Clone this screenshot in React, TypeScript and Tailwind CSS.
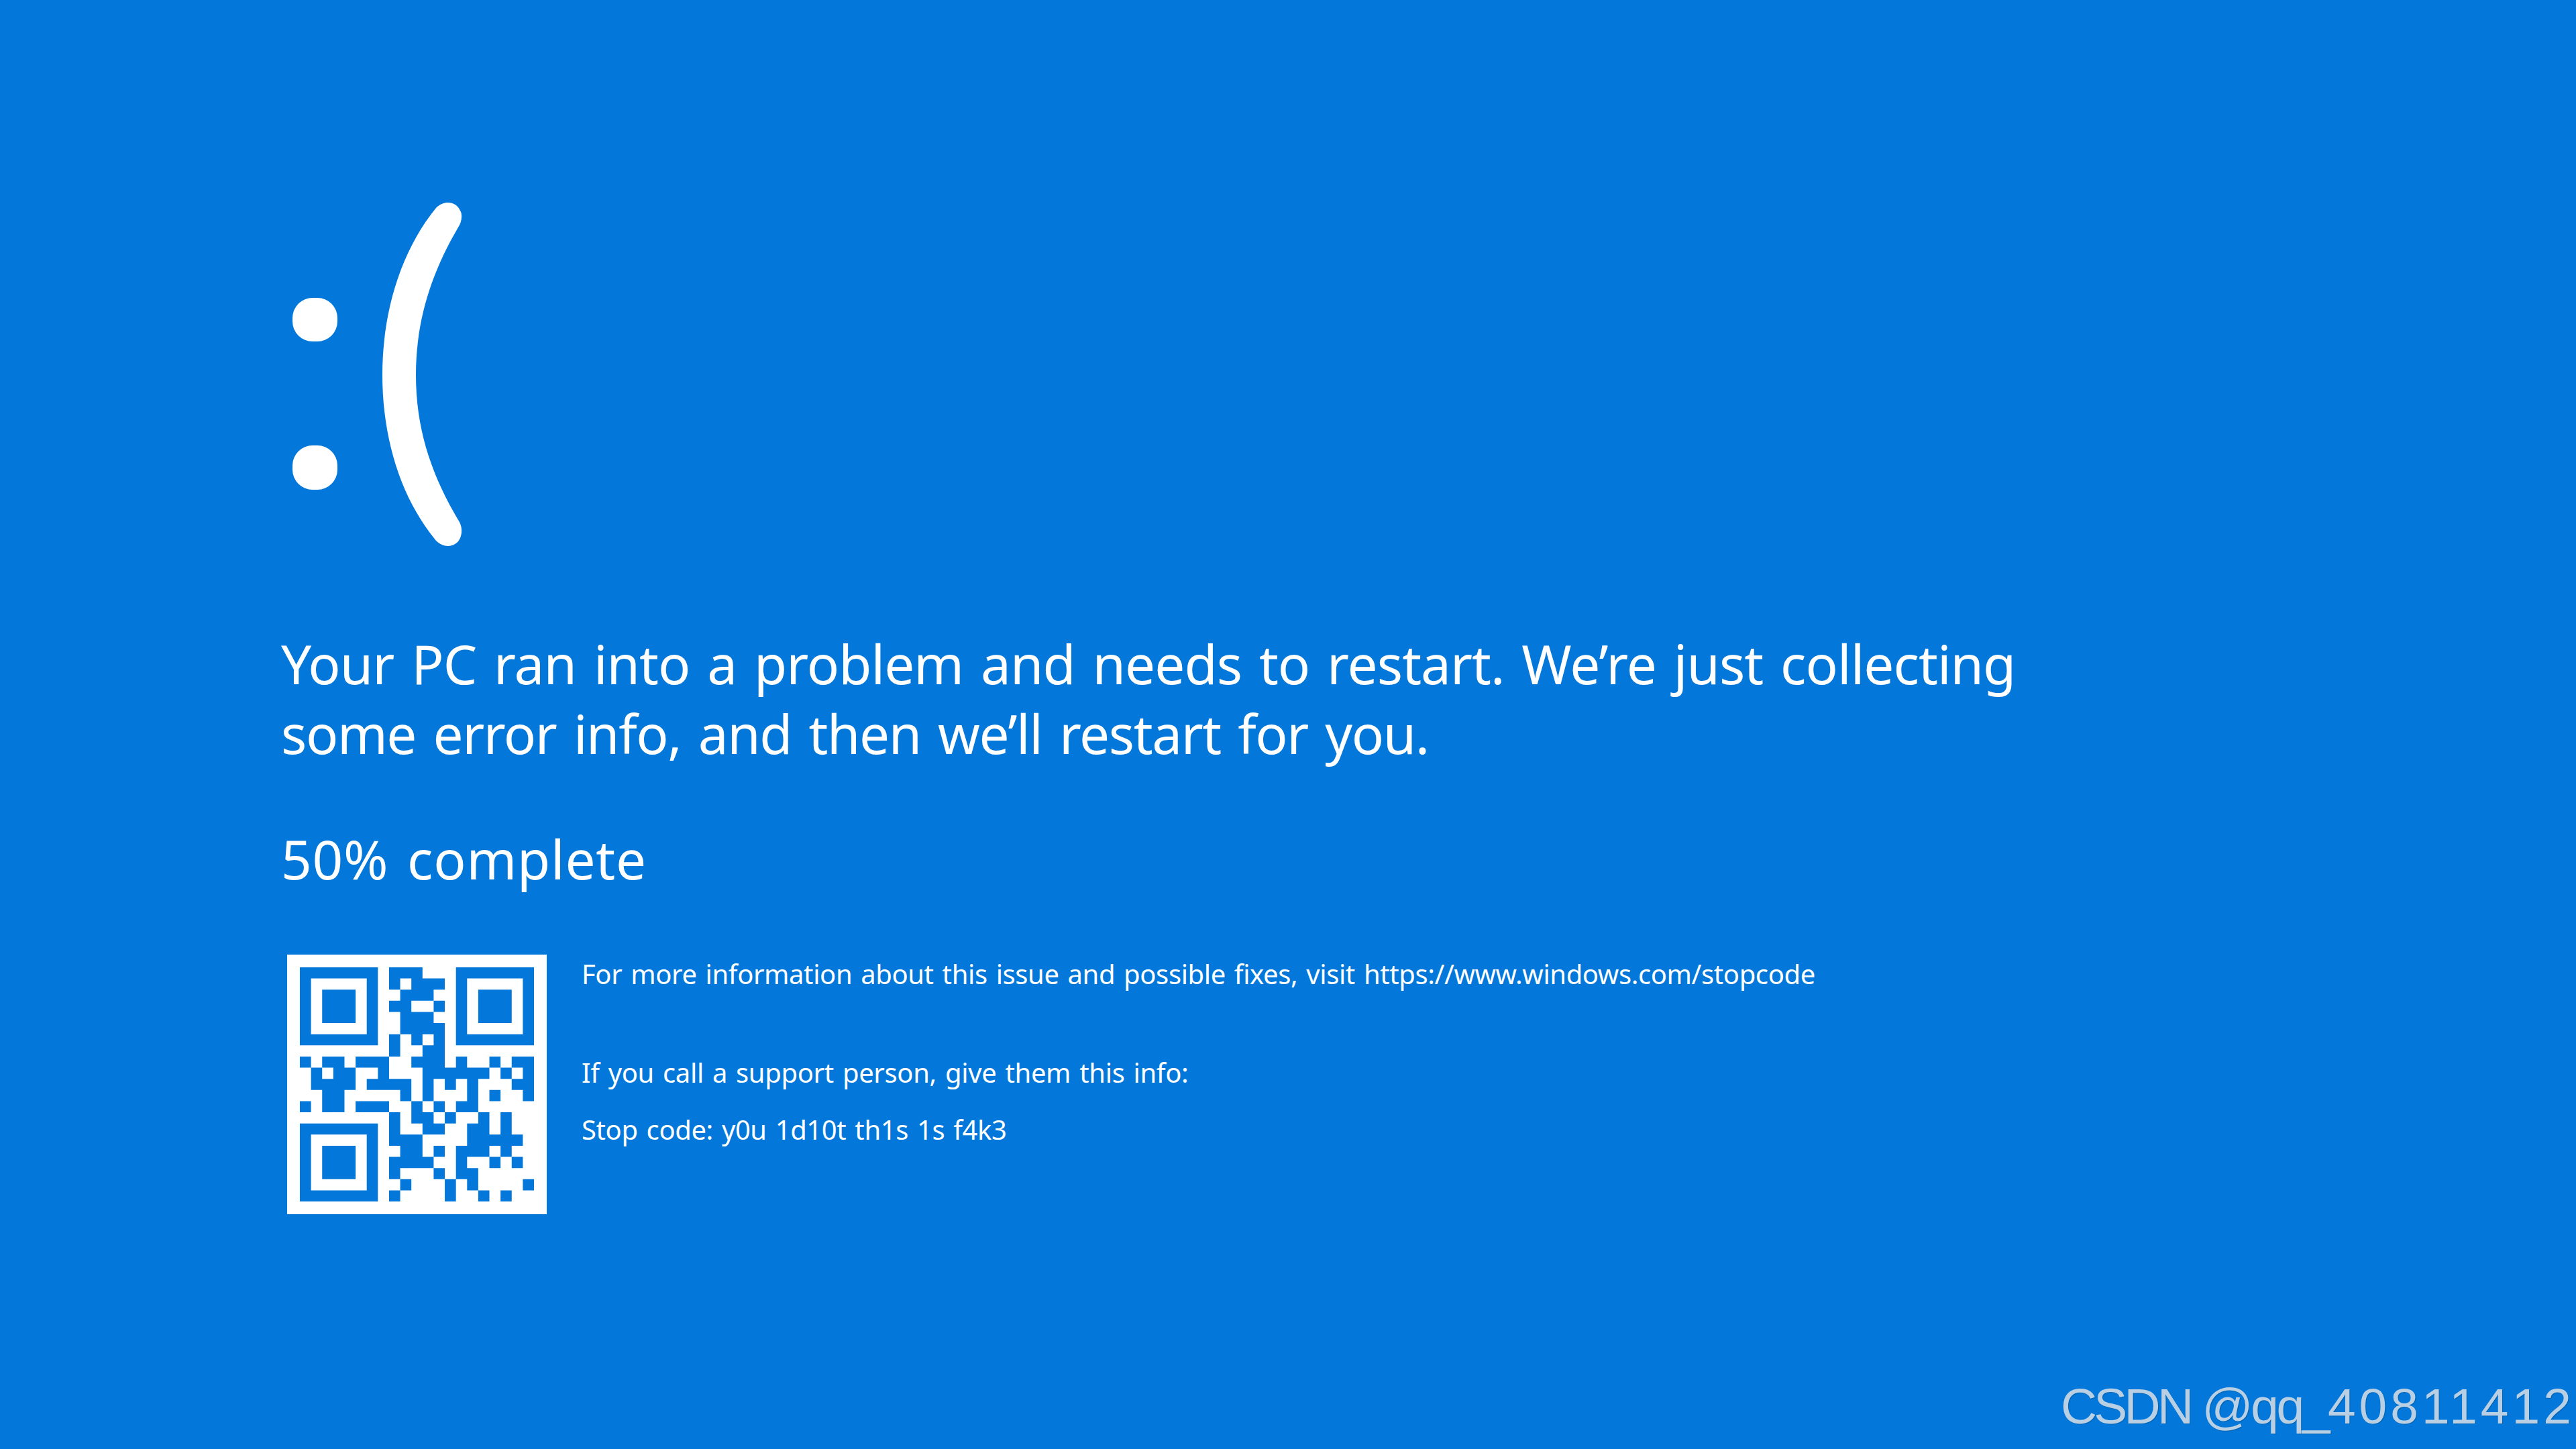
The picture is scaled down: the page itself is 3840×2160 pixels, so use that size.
const QR_ROWS: number[][] = [
  [8, 9, 10],
  [8, 10, 11, 12],
  [9, 10, 11],
  [8, 9, 12],
  [9, 10, 11],
  [9, 10, 11, 12],
  [8, 10, 12],
  [8, 11, 12],
  [0, 2, 3, 5, 6, 7, 10, 11, 12, 14, 17, 19, 20],
  [1, 3, 4, 7, 11, 12, 13, 14, 15, 16, 18, 20],
  [1, 2, 3, 4, 6, 7, 8, 9, 11, 13, 15, 19, 20],
  [2, 3, 9, 11, 15, 17, 20],
  [0, 2, 3, 5, 6, 7, 10, 12, 14, 15],
  [8, 10, 11, 13, 16, 18],
  [8, 11, 12, 15, 16, 18],
  [8, 9, 10, 15, 16, 17, 18, 19],
  [9, 10, 12, 14, 15, 16, 18],
  [8, 9, 10, 11, 14, 17, 19],
  [8, 12, 14, 15],
  [9, 13, 15, 20],
  [8, 13, 16, 18],
];

function finder(x: number, y: number) {
  return `M${x} ${y}h7v7h-7zM${x + 1} ${y + 1}v5h5v-5zM${x + 2} ${y + 2}h3v3h-3z`;
}

function QrCode() {
  let d = finder(0, 0) + finder(14, 0) + finder(0, 14);
  QR_ROWS.forEach((row, y) => {
    row.forEach((x) => {
      d += `M${x} ${y}h1v1h-1z`;
    });
  });
  return (
    <div className="w-[387px] h-[387px] bg-white p-[19px] shrink-0">
      <svg viewBox="0 0 21 21" className="block w-[349px] h-[349px]">
        <path d={d} fill="#0378da" fillRule="evenodd" />
      </svg>
    </div>
  );
}

function SadFace() {
  return (
    <svg viewBox="0 0 340 570" className="block w-[340px] h-[570px] ml-[-19px]">
      <rect x="36" y="174" width="67" height="65" rx="30" fill="#fff" />
      <rect x="36" y="394" width="67" height="66" rx="30" fill="#fff" />
      <path
        fill="#fff"
        d="M250 40C197 105 170 196 170 289C170 382 197 472 250 536C262 548 280 546 286 532C290 522 288 512 283 505C243 437 220 370 220 289C220 208 243 137 283 69C288 62 290 50 286 44C280 30 262 28 250 40Z"
      />
    </svg>
  );
}

export default function App() {
  return (
    <div
      className="relative w-[3840px] h-[2160px] bg-[#0378da] text-white overflow-hidden pt-[270px] pl-[419px]"
      style={{ fontFamily: '"Noto Sans", "Open Sans", sans-serif' }}
    >
      <SadFace />
      <div className="mt-[97px] text-[80px] leading-[104px] [word-spacing:6px]">
        <div className="tracking-[-0.95px]">Your PC ran into a problem and needs to restart. We’re just collecting</div>
        <div className="tracking-[-1.4px]">some error info, and then we’ll restart for you.</div>
      </div>
      <div className="mt-[83px] text-[80px] leading-[104px] tracking-[0.8px] [word-spacing:6px]">50% complete</div>
      <div className="mt-[91px] ml-[9px] flex gap-[52px]">
        <QrCode />
        <div className="flex flex-col text-[40px] leading-[54px] [word-spacing:3px] pt-[2px]">
          <div className="tracking-[-0.4px]">For more information about this issue and possible fixes, visit https://www.windows.com/stopcode</div>
          <div className="mt-[93px] tracking-[-0.35px]">If you call a support person, give them this info:</div>
          <div className="mt-[31px] tracking-[-0.4px]">Stop code: y0u 1d10t th1s 1s f4k3</div>
        </div>
      </div>
      <div
        className="absolute right-[2px] bottom-[21px] text-[75px] leading-[85px] text-[#b9d0e4] [text-shadow:1px_1px_1px_rgba(0,0,0,0.2)]"
        style={{ fontFamily: '"Liberation Sans", sans-serif' }}
      >
        <span className="tracking-[-4.8px]">CSDN</span>
        <span className="tracking-[-3.5px]"> @qq_</span>
        <span className="tracking-[5px]">40811412</span>
      </div>
    </div>
  );
}
